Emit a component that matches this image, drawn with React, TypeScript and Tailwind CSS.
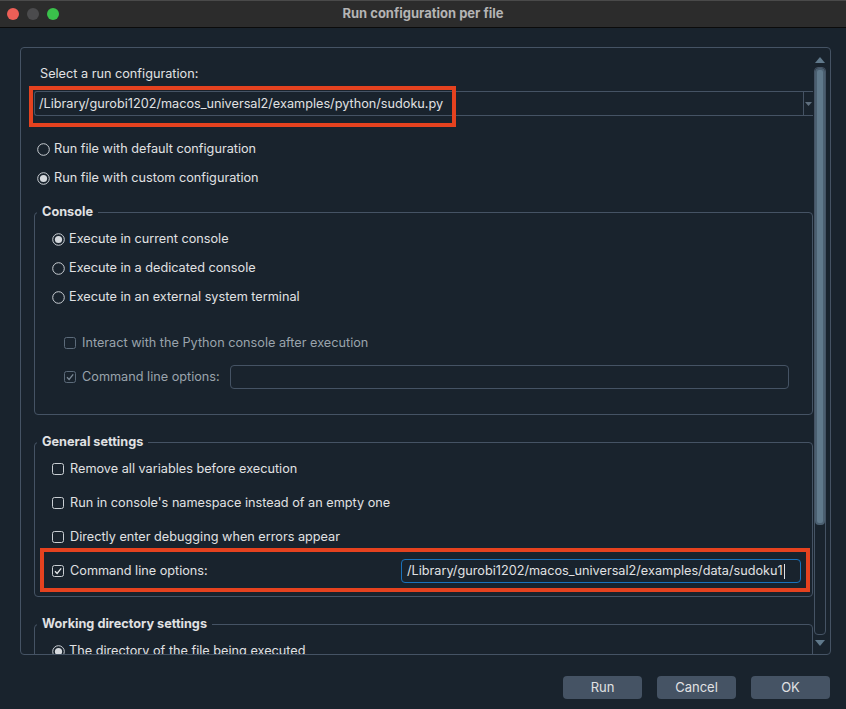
import React from 'react';

const FONT = { fontFamily: 'Inter, "Noto Sans", "Liberation Sans", sans-serif' };

function Radio({ checked, label }: { checked?: boolean; label: string }) {
  return (
    <div className="flex h-[20px] items-center">
      <svg width="13" height="13" viewBox="0 0 13 13" className="shrink-0">
        <circle cx="6.5" cy="6.5" r="5.8" fill="none" stroke="#c9ced3" strokeWidth="1" />
        {checked && <circle cx="6.5" cy="6.5" r="3.6" fill="#d5d9dd" />}
      </svg>
      <span className="ml-[4px] text-[12.7px] leading-[16px] text-[#e0e1e3]">{label}</span>
    </div>
  );
}

function Check({ checked, disabled, label }: { checked?: boolean; disabled?: boolean; label: string }) {
  const stroke = disabled ? '#5c6b7a' : '#c9ced3';
  return (
    <div className="flex h-[20px] items-center">
      <svg width="12" height="12" viewBox="0 0 12 12" className="shrink-0">
        <rect x="0.5" y="0.5" width="11" height="11" rx="2" fill="none" stroke={stroke} />
        {checked && (
          <path d="M3 6.2 L5.1 8.4 L9.2 3.4" fill="none" stroke={disabled ? '#7c8a97' : '#e6e8ea'} strokeWidth="1.3" />
        )}
      </svg>
      <span
        className={`ml-[6px] text-[12.7px] leading-[16px] ${disabled ? 'text-[#9aa3ac]' : 'text-[#e0e1e3]'}`}
      >
        {label}
      </span>
    </div>
  );
}

// fieldset + legend gives the Qt group box look: the title cuts the top border
function Group({ title, className, children }: { title: string; className?: string; children: React.ReactNode }) {
  return (
    <fieldset className={`rounded-[4px] border border-[#455364] ${className ?? ''}`}>
      <legend className="ml-[2px] px-[5px] text-[12.7px] font-bold leading-[16px] text-[#e0e1e3]">{title}</legend>
      {children}
    </fieldset>
  );
}

function Btn({ label }: { label: string }) {
  return (
    <button
      type="button"
      className="h-[23px] w-[79px] rounded-[4px] bg-[#455364] text-[13px] leading-[23px] text-[#e0e1e3]"
    >
      {label}
    </button>
  );
}

export default function App() {
  return (
    <div className="h-[709px] w-[846px] overflow-hidden bg-[#19232d]" style={FONT}>
      {/* title bar */}
      <div className="relative flex h-[28px] items-center border-b border-[#0b0b0b] border-t border-t-[#4a4a4a] bg-[#2c2c2c]">
        <div className="absolute left-[7px] top-[7px] flex gap-[8px]">
          <span className="h-[12px] w-[12px] rounded-full bg-[#ed5f57]" />
          <span className="h-[12px] w-[12px] rounded-full bg-[#4b4b4d]" />
          <span className="h-[12px] w-[12px] rounded-full bg-[#3ac14b]" />
        </div>
        <div className="w-full text-center text-[13px] font-bold text-[#b4b4b4]">Run configuration per file</div>
      </div>

      {/* scroll frame */}
      <div className="ml-[20px] mt-[19px] flex h-[608px] w-[811px] rounded-[4px] border border-[#455364]">
        <div className="h-[606px] w-[792px] overflow-hidden pl-[13px] pt-[18px]">
          <div className="ml-[6px] h-[16px] text-[12.7px] leading-[16px] text-[#e0e1e3]">Select a run configuration:</div>

          <div className="relative mt-[9px] flex h-[25px] items-center rounded-l-[3px] border-y border-l border-[#455364]">
            <span className="ml-[4px] flex-1 text-[12.7px] text-[#e0e1e3]">
              /Library/gurobi1202/macos_universal2/examples/python/sudoku.py
            </span>
            <div className="flex h-full w-[10px] items-center justify-center border-l border-[#455364]">
              <svg width="7" height="4" viewBox="0 0 7 4">
                <path d="M0 0 H7 L3.5 4 Z" fill="#5f6f7e" />
              </svg>
            </div>
            <div className="pointer-events-none absolute left-[-6px] top-[-6px] h-[41px] w-[427px] border-[4px] border-[#e5421f]" />
          </div>

          <div className="mt-[23px] pl-[3px]">
            <Radio label="Run file with default configuration" />
          </div>
          <div className="mt-[9px] pl-[3px]">
            <Radio checked label="Run file with custom configuration" />
          </div>

          <Group title="Console" className="mt-[16px]">
            <div className="pb-[25px] pl-[17px] pr-[23px]">
              <div className="mt-[9px]">
                <Radio checked label="Execute in current console" />
              </div>
              <div className="mt-[9px]">
                <Radio label="Execute in a dedicated console" />
              </div>
              <div className="mt-[9px]">
                <Radio label="Execute in an external system terminal" />
              </div>
              <div className="ml-[12px] mt-[26px]">
                <Check disabled label="Interact with the Python console after execution" />
              </div>
              <div className="ml-[12px] mt-[12px] flex h-[24px] items-center">
                <Check checked disabled label="Command line options:" />
                <div className="ml-[10px] h-[24px] flex-1 rounded-[4px] border border-[#455364]" />
              </div>
            </div>
          </Group>

          <Group title="General settings" className="mt-[19px]">
            <div className="pb-[13px] pl-[17px] pr-[11px]">
              <div className="mt-[9px]">
                <Check label="Remove all variables before execution" />
              </div>
              <div className="mt-[14px]">
                <Check label="Run in console's namespace instead of an empty one" />
              </div>
              <div className="mt-[14px]">
                <Check label="Directly enter debugging when errors appear" />
              </div>
              <div className="relative mt-[12px] flex h-[24px] items-center">
                <Check checked label="Command line options:" />
                <div className="ml-auto flex h-[24px] w-[400px] items-center rounded-[4px] border border-[#1a72bb] pl-[5px] text-[12.7px] text-[#e0e1e3]">
                  /Library/gurobi1202/macos_universal2/examples/data/sudoku1
                  <span className="ml-[1px] inline-block h-[15px] w-px bg-[#e0e1e3]" />
                </div>
                <div className="pointer-events-none absolute left-[-12px] top-[-11px] h-[44px] w-[770px] border-[4px] border-[#e5421f]" />
              </div>
            </div>
          </Group>

          <Group title="Working directory settings" className="mt-[19px]">
            <div className="mt-[9px] pl-[17px]">
              <Radio checked label="The directory of the file being executed" />
            </div>
          </Group>
        </div>

        {/* scrollbar */}
        <div className="ml-[1px] flex w-[12px] flex-col items-center pt-[9px]">
          <svg width="10" height="6" viewBox="0 0 10 6">
            <path d="M5 0 L10 6 H0 Z" fill="#60798b" />
          </svg>
          <div className="mt-[4px] flex h-[568px] w-[12px] flex-col rounded-[4px] border border-[#455364]">
            <div className="h-[457px] rounded-[4px] border-2 border-[#4b5f70] bg-[#60798b]" />
          </div>
          <svg width="10" height="6" viewBox="0 0 10 6" className="mt-[5px]">
            <path d="M0 0 H10 L5 6 Z" fill="#60798b" />
          </svg>
        </div>
      </div>

      {/* buttons */}
      <div className="mr-[16px] mt-[21px] flex justify-end gap-[15px]">
        <Btn label="Run" />
        <Btn label="Cancel" />
        <Btn label="OK" />
      </div>
    </div>
  );
}
